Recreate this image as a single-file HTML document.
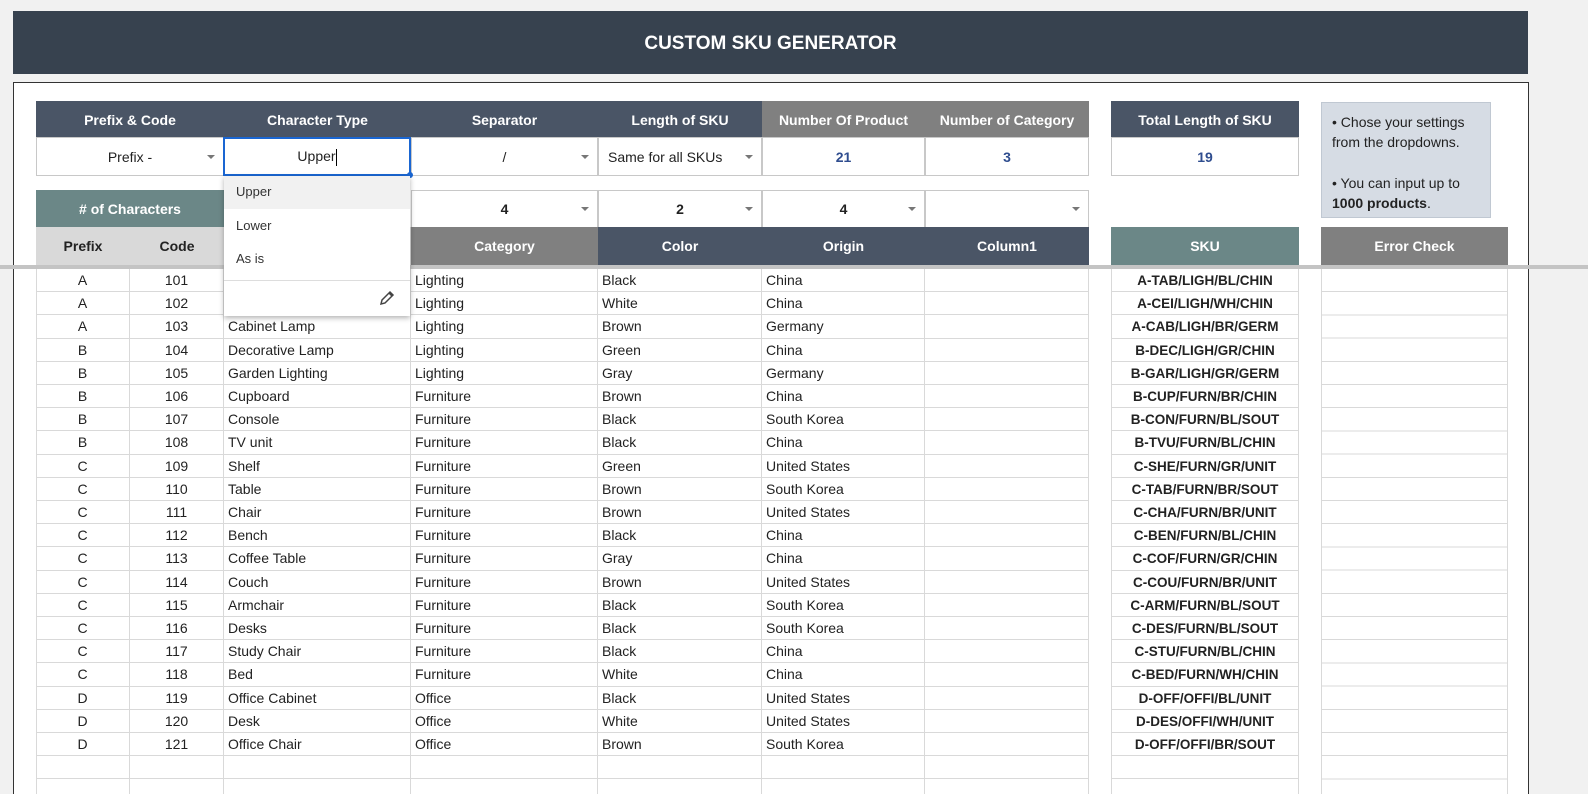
<!DOCTYPE html>
<html style="overflow:hidden"><head><meta charset="utf-8"><style>
*{box-sizing:border-box;margin:0;padding:0}
html,body{width:1588px;height:794px;overflow:hidden}
body{background:#f1f1f1;font-family:"Liberation Sans",sans-serif;position:relative;color:#222}
.abs{position:absolute}
.title{left:13px;top:11px;width:1515px;height:63px;background:#37424f;color:#fff;font-weight:bold;font-size:19px;text-align:center;line-height:66px}
.box{left:13px;top:82px;width:1516px;height:712px;background:#fff;border:1.5px solid #333;border-bottom:none}
.c{position:absolute;display:flex;align-items:center;justify-content:center;font-size:14px}
.h{color:#fff;font-weight:bold;font-size:14px}
.dk{background:#4a5566}.gr{background:#808080}.tl{background:#6b8787}.lg{background:#d9d9d9;color:#222;font-weight:bold}
.in{border:1px solid #c8c8c8;background:#fff;color:#222}
.blue{color:#2f4d8f}
.arr{position:absolute;right:8px;top:50%;margin-top:-2px;border-left:4px solid transparent;border-right:4px solid transparent;border-top:4px solid #777}
.row{position:absolute;height:23.2px;border-bottom:1px solid #d9d9d9;display:flex;font-size:14px}
.row div{border-right:1px solid #d9d9d9;height:100%;line-height:23px;padding-left:4px;white-space:nowrap;overflow:hidden}
.row .ctr{text-align:center;padding-left:0}
.sku{position:absolute;left:1111px;width:188px;height:23.2px;border:1px solid #d9d9d9;border-top:none;text-align:center;line-height:23px;font-weight:bold;font-size:13.5px}
.err{position:absolute;left:1321px;width:187px;height:23.2px;border:1px solid #d9d9d9;border-top:none}
</style></head><body>
<div class="abs title">CUSTOM SKU GENERATOR</div>
<div class="abs box"></div>

<div class="c h dk" style="left:36px;top:101px;width:188px;height:37px">Prefix &amp; Code</div>
<div class="c h dk" style="left:224px;top:101px;width:187px;height:37px">Character Type</div>
<div class="c h dk" style="left:411px;top:101px;width:187px;height:37px">Separator</div>
<div class="c h dk" style="left:598px;top:101px;width:164px;height:37px">Length of SKU</div>
<div class="c h gr" style="left:762px;top:101px;width:163px;height:37px">Number Of Product</div>
<div class="c h gr" style="left:925px;top:101px;width:164px;height:37px">Number of Category</div>
<div class="c h dk" style="left:1111px;top:101px;width:188px;height:37px">Total Length of SKU</div>

<div class="c in" style="left:36px;top:137px;width:188px;height:39px">Prefix -<span class="arr"></span></div>
<div class="c in" style="left:411px;top:137px;width:187px;height:39px">/<span class="arr"></span></div>
<div class="c in" style="left:598px;top:137px;width:164px;height:39px;justify-content:flex-start;padding-left:9px">Same for all SKUs<span class="arr"></span></div>
<div class="c in blue" style="left:762px;top:137px;width:163px;height:39px;font-weight:bold">21</div>
<div class="c in blue" style="left:925px;top:137px;width:164px;height:39px;font-weight:bold">3</div>
<div class="c in blue" style="left:1111px;top:137px;width:188px;height:39px;font-weight:bold">19</div>

<div class="abs" style="left:1321px;top:102px;width:170px;height:116px;background:#d6dce4;border:1px solid #c0c8d2;font-size:14px;padding:9px 10px;line-height:20px">• Chose your settings from the dropdowns.<div style="height:21px"></div>• You can input up to <b>1000 products</b>.</div>

<div class="c h tl" style="left:36px;top:190px;width:188px;height:38px">#&nbsp;of Characters</div>
<div class="c in" style="left:411px;top:190px;width:187px;height:38px;font-weight:bold">4<span class="arr"></span></div>
<div class="c in" style="left:598px;top:190px;width:164px;height:38px;font-weight:bold">2<span class="arr"></span></div>
<div class="c in" style="left:762px;top:190px;width:163px;height:38px;font-weight:bold">4<span class="arr"></span></div>
<div class="c in" style="left:925px;top:190px;width:164px;height:38px"><span class="arr"></span></div>

<div class="c lg" style="left:36px;top:227px;width:94px;height:38px">Prefix</div>
<div class="c lg" style="left:130px;top:227px;width:94px;height:38px">Code</div>
<div class="c lg" style="left:224px;top:227px;width:187px;height:38px"></div>
<div class="c h gr" style="left:411px;top:227px;width:187px;height:38px">Category</div>
<div class="c h dk" style="left:598px;top:227px;width:164px;height:38px">Color</div>
<div class="c h dk" style="left:762px;top:227px;width:163px;height:38px">Origin</div>
<div class="c h dk" style="left:925px;top:227px;width:164px;height:38px">Column1</div>
<div class="c h tl" style="left:1111px;top:227px;width:188px;height:38px">SKU</div>
<div class="c h gr" style="left:1321px;top:227px;width:187px;height:38px">Error Check</div>

<div class="abs" style="left:0;top:265px;width:1588px;height:4px;background:#c4c4c4"></div>

<div class="row" style="left:36px;top:269px"><div class="ctr" style="width:94px">A</div><div class="ctr" style="width:94px">101</div><div style="width:187px">Table Lamp</div><div style="width:187px">Lighting</div><div style="width:164px">Black</div><div style="width:163px">China</div><div style="width:164px"></div></div>
<div class="row" style="left:36px;top:292.2px"><div class="ctr" style="width:94px">A</div><div class="ctr" style="width:94px">102</div><div style="width:187px">Ceiling Lamp</div><div style="width:187px">Lighting</div><div style="width:164px">White</div><div style="width:163px">China</div><div style="width:164px"></div></div>
<div class="row" style="left:36px;top:315.4px"><div class="ctr" style="width:94px">A</div><div class="ctr" style="width:94px">103</div><div style="width:187px">Cabinet Lamp</div><div style="width:187px">Lighting</div><div style="width:164px">Brown</div><div style="width:163px">Germany</div><div style="width:164px"></div></div>
<div class="row" style="left:36px;top:338.6px"><div class="ctr" style="width:94px">B</div><div class="ctr" style="width:94px">104</div><div style="width:187px">Decorative Lamp</div><div style="width:187px">Lighting</div><div style="width:164px">Green</div><div style="width:163px">China</div><div style="width:164px"></div></div>
<div class="row" style="left:36px;top:361.8px"><div class="ctr" style="width:94px">B</div><div class="ctr" style="width:94px">105</div><div style="width:187px">Garden Lighting</div><div style="width:187px">Lighting</div><div style="width:164px">Gray</div><div style="width:163px">Germany</div><div style="width:164px"></div></div>
<div class="row" style="left:36px;top:385px"><div class="ctr" style="width:94px">B</div><div class="ctr" style="width:94px">106</div><div style="width:187px">Cupboard</div><div style="width:187px">Furniture</div><div style="width:164px">Brown</div><div style="width:163px">China</div><div style="width:164px"></div></div>
<div class="row" style="left:36px;top:408.2px"><div class="ctr" style="width:94px">B</div><div class="ctr" style="width:94px">107</div><div style="width:187px">Console</div><div style="width:187px">Furniture</div><div style="width:164px">Black</div><div style="width:163px">South Korea</div><div style="width:164px"></div></div>
<div class="row" style="left:36px;top:431.4px"><div class="ctr" style="width:94px">B</div><div class="ctr" style="width:94px">108</div><div style="width:187px">TV unit</div><div style="width:187px">Furniture</div><div style="width:164px">Black</div><div style="width:163px">China</div><div style="width:164px"></div></div>
<div class="row" style="left:36px;top:454.6px"><div class="ctr" style="width:94px">C</div><div class="ctr" style="width:94px">109</div><div style="width:187px">Shelf</div><div style="width:187px">Furniture</div><div style="width:164px">Green</div><div style="width:163px">United States</div><div style="width:164px"></div></div>
<div class="row" style="left:36px;top:477.8px"><div class="ctr" style="width:94px">C</div><div class="ctr" style="width:94px">110</div><div style="width:187px">Table</div><div style="width:187px">Furniture</div><div style="width:164px">Brown</div><div style="width:163px">South Korea</div><div style="width:164px"></div></div>
<div class="row" style="left:36px;top:501px"><div class="ctr" style="width:94px">C</div><div class="ctr" style="width:94px">111</div><div style="width:187px">Chair</div><div style="width:187px">Furniture</div><div style="width:164px">Brown</div><div style="width:163px">United States</div><div style="width:164px"></div></div>
<div class="row" style="left:36px;top:524.2px"><div class="ctr" style="width:94px">C</div><div class="ctr" style="width:94px">112</div><div style="width:187px">Bench</div><div style="width:187px">Furniture</div><div style="width:164px">Black</div><div style="width:163px">China</div><div style="width:164px"></div></div>
<div class="row" style="left:36px;top:547.4px"><div class="ctr" style="width:94px">C</div><div class="ctr" style="width:94px">113</div><div style="width:187px">Coffee Table</div><div style="width:187px">Furniture</div><div style="width:164px">Gray</div><div style="width:163px">China</div><div style="width:164px"></div></div>
<div class="row" style="left:36px;top:570.6px"><div class="ctr" style="width:94px">C</div><div class="ctr" style="width:94px">114</div><div style="width:187px">Couch</div><div style="width:187px">Furniture</div><div style="width:164px">Brown</div><div style="width:163px">United States</div><div style="width:164px"></div></div>
<div class="row" style="left:36px;top:593.8px"><div class="ctr" style="width:94px">C</div><div class="ctr" style="width:94px">115</div><div style="width:187px">Armchair</div><div style="width:187px">Furniture</div><div style="width:164px">Black</div><div style="width:163px">South Korea</div><div style="width:164px"></div></div>
<div class="row" style="left:36px;top:617px"><div class="ctr" style="width:94px">C</div><div class="ctr" style="width:94px">116</div><div style="width:187px">Desks</div><div style="width:187px">Furniture</div><div style="width:164px">Black</div><div style="width:163px">South Korea</div><div style="width:164px"></div></div>
<div class="row" style="left:36px;top:640.2px"><div class="ctr" style="width:94px">C</div><div class="ctr" style="width:94px">117</div><div style="width:187px">Study Chair</div><div style="width:187px">Furniture</div><div style="width:164px">Black</div><div style="width:163px">China</div><div style="width:164px"></div></div>
<div class="row" style="left:36px;top:663.4px"><div class="ctr" style="width:94px">C</div><div class="ctr" style="width:94px">118</div><div style="width:187px">Bed</div><div style="width:187px">Furniture</div><div style="width:164px">White</div><div style="width:163px">China</div><div style="width:164px"></div></div>
<div class="row" style="left:36px;top:686.6px"><div class="ctr" style="width:94px">D</div><div class="ctr" style="width:94px">119</div><div style="width:187px">Office Cabinet</div><div style="width:187px">Office</div><div style="width:164px">Black</div><div style="width:163px">United States</div><div style="width:164px"></div></div>
<div class="row" style="left:36px;top:709.8px"><div class="ctr" style="width:94px">D</div><div class="ctr" style="width:94px">120</div><div style="width:187px">Desk</div><div style="width:187px">Office</div><div style="width:164px">White</div><div style="width:163px">United States</div><div style="width:164px"></div></div>
<div class="row" style="left:36px;top:733px"><div class="ctr" style="width:94px">D</div><div class="ctr" style="width:94px">121</div><div style="width:187px">Office Chair</div><div style="width:187px">Office</div><div style="width:164px">Brown</div><div style="width:163px">South Korea</div><div style="width:164px"></div></div>
<div class="row" style="left:36px;top:756.2px"><div style="width:94px"></div><div style="width:94px"></div><div style="width:187px"></div><div style="width:187px"></div><div style="width:164px"></div><div style="width:163px"></div><div style="width:164px"></div></div>
<div class="row" style="left:36px;top:779.4px"><div style="width:94px"></div><div style="width:94px"></div><div style="width:187px"></div><div style="width:187px"></div><div style="width:164px"></div><div style="width:163px"></div><div style="width:164px"></div></div>
<div class="abs" style="left:36px;top:269px;width:1px;height:530px;background:#d9d9d9"></div>

<div class="sku" style="top:269px">A-TAB/LIGH/BL/CHIN</div>
<div class="sku" style="top:292.2px">A-CEI/LIGH/WH/CHIN</div>
<div class="sku" style="top:315.4px">A-CAB/LIGH/BR/GERM</div>
<div class="sku" style="top:338.6px">B-DEC/LIGH/GR/CHIN</div>
<div class="sku" style="top:361.8px">B-GAR/LIGH/GR/GERM</div>
<div class="sku" style="top:385px">B-CUP/FURN/BR/CHIN</div>
<div class="sku" style="top:408.2px">B-CON/FURN/BL/SOUT</div>
<div class="sku" style="top:431.4px">B-TVU/FURN/BL/CHIN</div>
<div class="sku" style="top:454.6px">C-SHE/FURN/GR/UNIT</div>
<div class="sku" style="top:477.8px">C-TAB/FURN/BR/SOUT</div>
<div class="sku" style="top:501px">C-CHA/FURN/BR/UNIT</div>
<div class="sku" style="top:524.2px">C-BEN/FURN/BL/CHIN</div>
<div class="sku" style="top:547.4px">C-COF/FURN/GR/CHIN</div>
<div class="sku" style="top:570.6px">C-COU/FURN/BR/UNIT</div>
<div class="sku" style="top:593.8px">C-ARM/FURN/BL/SOUT</div>
<div class="sku" style="top:617px">C-DES/FURN/BL/SOUT</div>
<div class="sku" style="top:640.2px">C-STU/FURN/BL/CHIN</div>
<div class="sku" style="top:663.4px">C-BED/FURN/WH/CHIN</div>
<div class="sku" style="top:686.6px">D-OFF/OFFI/BL/UNIT</div>
<div class="sku" style="top:709.8px">D-DES/OFFI/WH/UNIT</div>
<div class="sku" style="top:733px">D-OFF/OFFI/BR/SOUT</div>
<div class="sku" style="top:756.2px"></div>
<div class="sku" style="top:779.4px"></div>

<div class="err" style="top:269px;height:530px;border-bottom:none;background:repeating-linear-gradient(to bottom,transparent 0,transparent 22.2px,#d9d9d9 22.2px,#d9d9d9 23.2px)"></div>

<div class="abs" style="left:223px;top:137px;width:188px;height:39px;border:2px solid #1a66d2;background:#fff;font-size:14px;text-align:center;line-height:34px">Upper<span style="display:inline-block;width:1px;height:17px;background:#000;vertical-align:middle"></span></div>
<div class="abs" style="left:407px;top:172px;width:6px;height:6px;background:#1a66d2;border-radius:50%"></div>
<div class="abs" style="left:224px;top:176px;width:186px;height:140px;background:#fff;box-shadow:0 2px 5px rgba(0,0,0,.3);font-size:13px;color:#333">
<div style="height:33px;background:#f1f1f1;line-height:31px;padding-left:12px">Upper</div>
<div style="height:33px;line-height:33px;padding-left:12px">Lower</div>
<div style="height:33px;line-height:33px;padding-left:12px">As is</div>
<div style="border-top:1px solid #ddd;margin-top:5px;height:36px;position:relative">
<svg style="position:absolute;right:14px;top:8px" width="18" height="18" viewBox="0 0 18 18"><path d="M3 15 L4 11 L12 3 L15 6 L7 14 Z M11 4 L14 7" fill="none" stroke="#444" stroke-width="1.5"/></svg>
</div></div>
</body></html>
